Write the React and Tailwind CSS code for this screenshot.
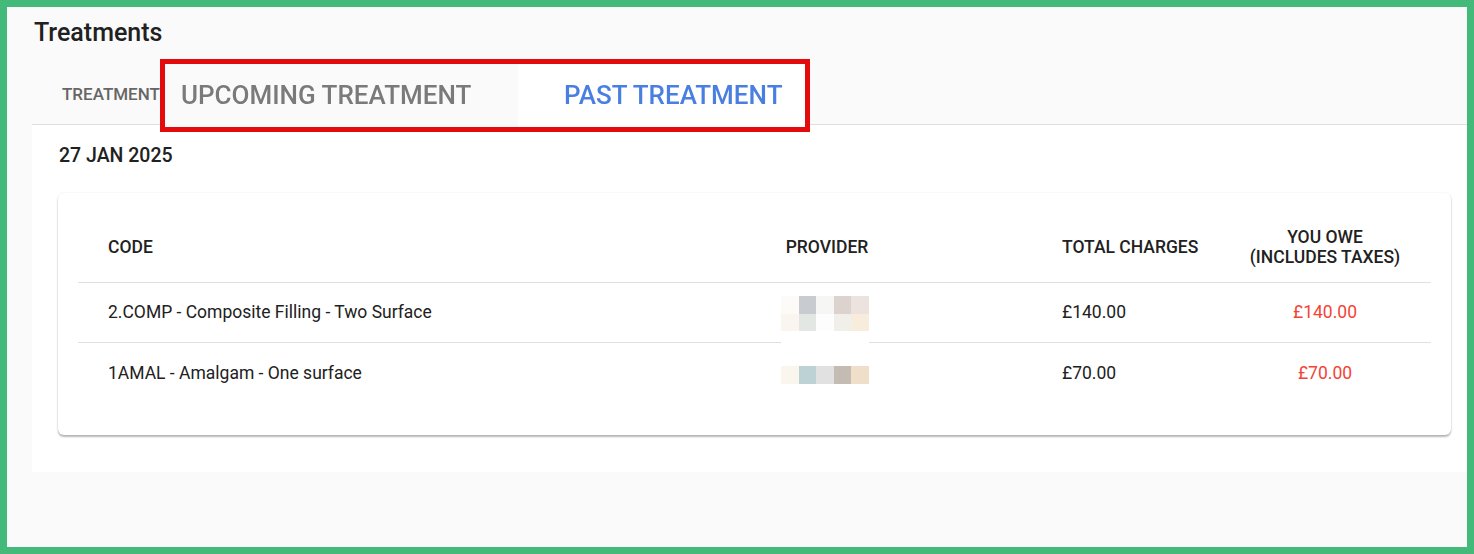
import React from "react";

const rows = [
  { code: "2.COMP - Composite Filling - Two Surface", total: "£140.00", owe: "£140.00" },
  { code: "1AMAL - Amalgam - One surface", total: "£70.00", owe: "£70.00" },
];

// redacted provider names (pixel blocks)
const mosaic = [
  ["#fcfbf7", "#c8ccd1", "#f6f6f4", "#ddd3ce", "#ece3de"],
  ["#faf6ef", "#e2e7e4", "#fdfdfd", "#f0efea", "#f8eddd"],
  ["#ffffff", "#ffffff", "#ffffff", "#ffffff", "#ffffff"],
  ["#ffffff", "#ffffff", "#ffffff", "#ffffff", "#ffffff"],
  ["#faf6ee", "#bdd2d5", "#e1e1e1", "#c4bcb3", "#efdfca"],
];

const cols = "grid grid-cols-[544px_410px_187px_1fr] items-center";

export default function App() {
  return (
    <div
      className="relative w-full h-[554px] border-[7px] border-[#43b97a] bg-[#fafafa] text-[#212121] overflow-hidden"
      style={{ fontFamily: "Roboto, 'Liberation Sans', sans-serif" }}
    >
      <div className="pl-[25px]">
        {/* Title */}
        <h1 className="pt-[10px] ml-[2px] h-[42px] text-[25px] leading-[32px] font-medium">Treatments</h1>

        {/* Tabs */}
        <div className="mt-[13px] h-[63px] border-b border-[#dedede] flex items-center pl-[30px] pt-[4px]">
          <span className="text-[17px] font-medium text-[#666666]">TREATMENT</span>
        </div>

        {/* Content */}
        <div className="bg-white h-[347px] pt-[19px] pl-[26px] pr-[16px]">
          <div className="pl-[1px] h-[24px] text-[19.5px] leading-[24px] font-medium">27 JAN 2025</div>

          <div className="relative mt-[25px] bg-white rounded-md shadow-[0_2px_2px_rgba(0,0,0,0.28),0_0_2px_rgba(0,0,0,0.1)] pt-[18px] pb-[32px] px-[20px]">
            <div className={`${cols} h-[72px] border-b border-[#e0e0e0] text-[17.5px] font-medium leading-[20px]`}>
              <div className="pl-[30px]">CODE</div>
              <div className="text-center">PROVIDER</div>
              <div className="pl-[30px]">TOTAL CHARGES</div>
              <div className="text-center">
                YOU OWE
                <br />
                (INCLUDES TAXES)
              </div>
            </div>
            {rows.map((r, i) => (
              <div
                key={r.code}
                className={`${cols} h-[60px] text-[17.5px] ${i < rows.length - 1 ? "border-b border-[#e0e0e0]" : ""}`}
              >
                <div className="pl-[30px]">{r.code}</div>
                <div />
                <div className="pl-[30px]">{r.total}</div>
                <div className="text-center text-[#f44336]">{r.owe}</div>
              </div>
            ))}

            {/* provider redaction */}
            <div className="absolute left-[723px] top-[103px] w-[88px] h-[88px] grid grid-cols-5 grid-rows-5">
              {mosaic.flat().map((c, k) => (
                <div key={k} style={{ backgroundColor: c }} />
              ))}
            </div>
          </div>
        </div>
      </div>

      {/* zoomed callout of the tabs */}
      <div className="absolute left-[153px] top-[52px] w-[650px] h-[73px] border-[5px] border-[#e30b0b] flex">
        <div className="w-[353px] bg-[#fafafa] flex items-center pl-[16px]">
          <span className="text-[26px] font-medium text-[#7a7a7a] blur-[0.5px]">UPCOMING TREATMENT</span>
        </div>
        <div className="flex-1 bg-white flex items-center pl-[46px]">
          <span className="text-[26px] font-medium text-[#4a7fe2] blur-[0.3px]">PAST TREATMENT</span>
        </div>
      </div>
    </div>
  );
}
